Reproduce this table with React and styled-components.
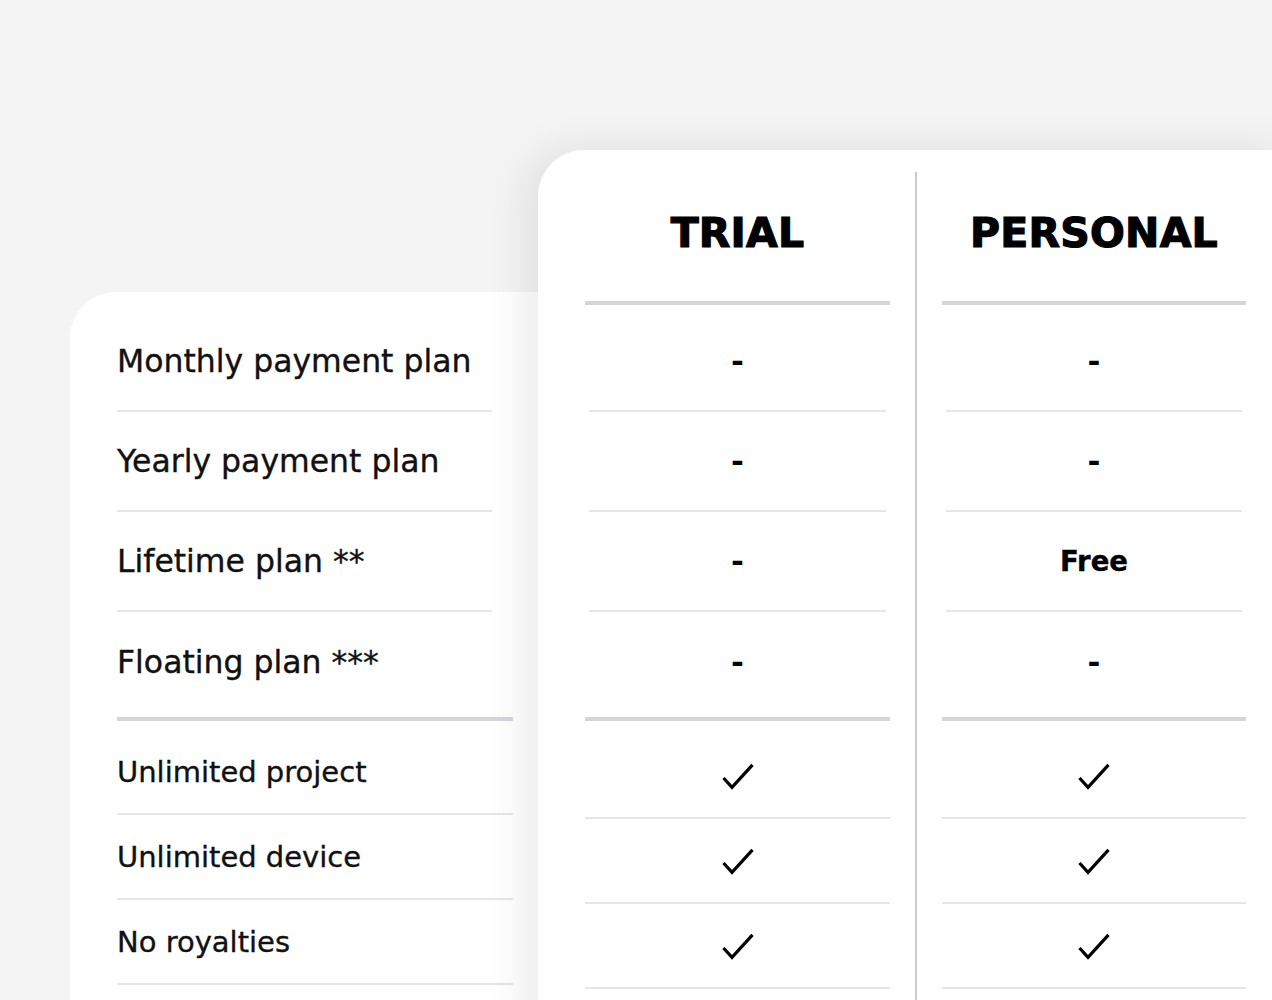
import React from 'react';
import styled, { createGlobalStyle } from 'styled-components';

const Global = createGlobalStyle`
  html, body { margin: 0; padding: 0; background: #f4f4f4; }
  body { font-family: "DejaVu Sans", "Liberation Sans", sans-serif; color: #111; }
`;

const Page = styled.div`
  width: 1272px;
  height: 1000px;
  overflow: hidden;
  display: flex;
  align-items: flex-start;
  background: #f4f4f4;
`;

const LabelCard = styled.section`
  flex-shrink: 0;
  box-sizing: border-box;
  margin: 292px 0 0 70px;
  width: 520px;
  height: 800px;
  padding: 20px 0 0 47px;
  background: #fff;
  border-top-left-radius: 46px;
`;

const LabelList = styled.div`
  width: 396px;
`;

const PlanCard = styled.section`
  flex-shrink: 0;
  position: relative;
  z-index: 1;
  box-sizing: border-box;
  margin: 150px 0 0 -52px;
  width: 760px;
  height: 900px;
  padding: 22px 0 0 21px;
  display: flex;
  align-items: stretch;
  background: #fff;
  border-top-left-radius: 46px;
  box-shadow: -14px -2px 40px rgba(0, 0, 0, 0.08);
`;

const Column = styled.div`
  box-sizing: border-box;
  width: ${p => p.$w}px;
  padding: 0 ${p => p.$pr}px 0 ${p => p.$pl}px;
  border-left: ${p => (p.$divided ? '2px solid #c9cbcf' : 'none')};
`;

const ColHeader = styled.h2`
  margin: 0 0 7px;
  box-sizing: border-box;
  height: 133px;
  padding-bottom: 7px;
  display: flex;
  align-items: center;
  justify-content: center;
  border-bottom: 4px solid #d4d5d8;
  font-size: 41px;
  font-weight: 700;
  letter-spacing: 0.2px;
  color: #000;
  -webkit-text-stroke: 1.2px #000;
`;

const Section = styled.div`
  padding-top: ${p => p.$pt || 0}px;
`;

const Row = styled.div`
  box-sizing: border-box;
  height: ${p => p.$h}px;
  display: flex;
  align-items: center;
  justify-content: ${p => (p.$center ? 'center' : 'flex-start')};
  margin: 0 ${p => p.$mr || 0}px 0 ${p => p.$ml || 0}px;
  border-bottom: ${p => (p.$plain ? 'none' : '2px solid #e6e6e8')};
`;

const SectionRule = styled.div`
  height: 4px;
  margin-top: 5px;
  background: #d4d5d8;
`;

const Label = styled.span`
  font-size: ${p => (p.$small ? 29 : 31.5)}px;
  font-weight: 400;
  color: #111;
  white-space: nowrap;
  -webkit-text-stroke: 0.35px #111;
`;

const Dash = styled.span`
  font-size: 31px;
  font-weight: 700;
  color: #000;
  line-height: 1;
`;

const Value = styled.span`
  font-size: 27.5px;
  font-weight: 700;
  color: #000;
  -webkit-text-stroke: 0.4px #000;
`;

const CheckSvg = styled.svg`
  width: 34px;
  height: 28px;
  margin-top: 3px;
`;

const Check = () => (
  <CheckSvg viewBox="0 0 34 28">
    <polyline
      points="2.5,15 11,24.3 31.5,1.8"
      fill="none"
      stroke="#000"
      strokeWidth="3.2"
      strokeLinejoin="miter"
    />
  </CheckSvg>
);

const paymentRows = [
  { label: 'Monthly payment plan', trial: '-', personal: '-' },
  { label: 'Yearly payment plan', trial: '-', personal: '-' },
  { label: 'Lifetime plan **', trial: '-', personal: 'Free' },
  { label: 'Floating plan ***', trial: '-', personal: '-' },
];

const featureRows = ['Unlimited project', 'Unlimited device', 'No royalties'];

const Cell = ({ v }) => (v === '-' ? <Dash>-</Dash> : <Value>{v}</Value>);

const PlanColumn = ({ title, keyName, w, pl, pr, divided }) => (
  <Column $w={w} $pl={pl} $pr={pr} $divided={divided}>
    <ColHeader>{title}</ColHeader>
    <Section>
      {paymentRows.map((r, i) => {
        const last = i === paymentRows.length - 1;
        return (
          <Row key={r.label} $h={100} $center $plain={last} $ml={last ? 0 : 4} $mr={last ? 0 : 4}>
            <Cell v={r[keyName]} />
          </Row>
        );
      })}
      <SectionRule />
    </Section>
    <Section $pt={13}>
      {featureRows.map(f => (
        <Row key={f} $h={85} $center>
          <Check />
        </Row>
      ))}
    </Section>
  </Column>
);

export default function App() {
  return (
    <>
      <Global />
      <Page>
        <LabelCard>
          <LabelList>
            <Section>
              {paymentRows.map((r, i) => {
                const last = i === paymentRows.length - 1;
                return (
                  <Row key={r.label} $h={100} $plain={last} $mr={last ? 0 : 21}>
                    <Label>{r.label}</Label>
                  </Row>
                );
              })}
              <SectionRule />
            </Section>
            <Section $pt={9}>
              {featureRows.map(f => (
                <Row key={f} $h={85}>
                  <Label $small>{f}</Label>
                </Row>
              ))}
            </Section>
          </LabelList>
        </LabelCard>
        <PlanCard>
          <PlanColumn title="TRIAL" keyName="trial" w={356} pl={26} pr={25} />
          <PlanColumn title="PERSONAL" keyName="personal" w={357} pl={25} pr={26} divided />
        </PlanCard>
      </Page>
    </>
  );
}
